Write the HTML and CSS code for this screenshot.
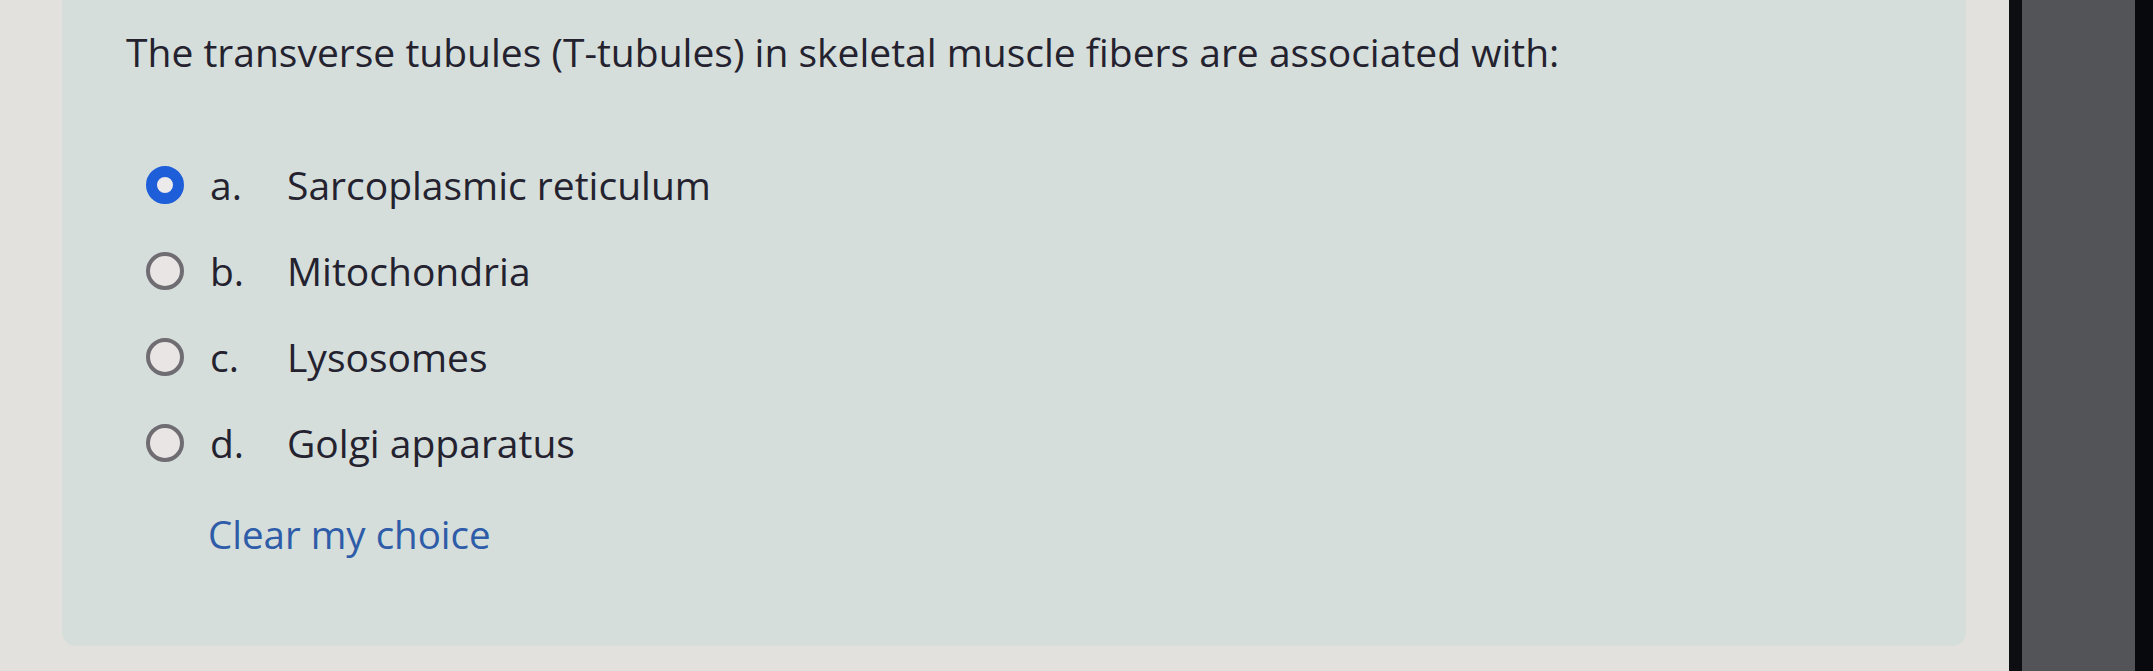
FILE: index.html
```html
<!DOCTYPE html>
<html>
<head>
<meta charset="utf-8">
<link rel="stylesheet" href="styles.css">
</head>
<body>
<div class="screen">
  <div class="page">
    <div class="card">
      <div class="question">The transverse tubules (T-tubules) in skeletal muscle fibers are associated with:</div>
      <div class="answers">
        <div class="option"><span class="radio checked"></span><span class="letter">a.</span><span class="text">Sarcoplasmic reticulum</span></div>
        <div class="option"><span class="radio"></span><span class="letter">b.</span><span class="text">Mitochondria</span></div>
        <div class="option"><span class="radio"></span><span class="letter">c.</span><span class="text">Lysosomes</span></div>
        <div class="option"><span class="radio"></span><span class="letter">d.</span><span class="text">Golgi apparatus</span></div>
      </div>
      <div class="clear">Clear my choice</div>
    </div>
  </div>
  <div class="bezel-inner"></div>
  <div class="bezel-panel"></div>
  <div class="bezel-outer"></div>
</div>
</body>
</html>
```
FILE: styles.css
```css
html, body {
  margin: 0;
  padding: 0;
  width: 2153px;
  height: 671px;
  overflow: hidden;
}
body {
  font-family: "Open Sans", Lato, sans-serif;
  color: #24222f;
}
.screen {
  display: flex;
  height: 671px;
}
.page {
  width: 2009px;
  background: #e3e1dd;
  padding-left: 62px;
  padding-right: 43px;
  box-sizing: border-box;
}
.card {
  background: #d5dedb;
  height: 646px;
  border-radius: 0 0 14px 14px;
  padding: 29px 0 0 64px;
  box-sizing: border-box;
}
.question {
  font-size: 39px;
  line-height: 46px;
}
.answers {
  margin-top: 87px;
  margin-left: 20px;
  display: flex;
  flex-direction: column;
  gap: 40px;
}
.option {
  display: flex;
  align-items: center;
  font-size: 39px;
  line-height: 46px;
}
.radio {
  width: 38px;
  height: 38px;
  box-sizing: border-box;
  border-radius: 50%;
  border: 4px solid #6f6c72;
  background: #e8e5e4;
  flex: none;
}
.radio.checked {
  border: 11px solid #1f5ed9;
  background: #eceaea;
}
.letter {
  width: 77px;
  margin-left: 26px;
}
.clear {
  margin-top: 45px;
  margin-left: 82px;
  font-size: 38.5px;
  line-height: 46px;
  color: #2e5ca8;
}
.bezel-inner {
  width: 13px;
  background: #0d0e12;
}
.bezel-panel {
  width: 113px;
  background: #525457;
}
.bezel-outer {
  flex: 1;
  background: #08090c;
}
```
